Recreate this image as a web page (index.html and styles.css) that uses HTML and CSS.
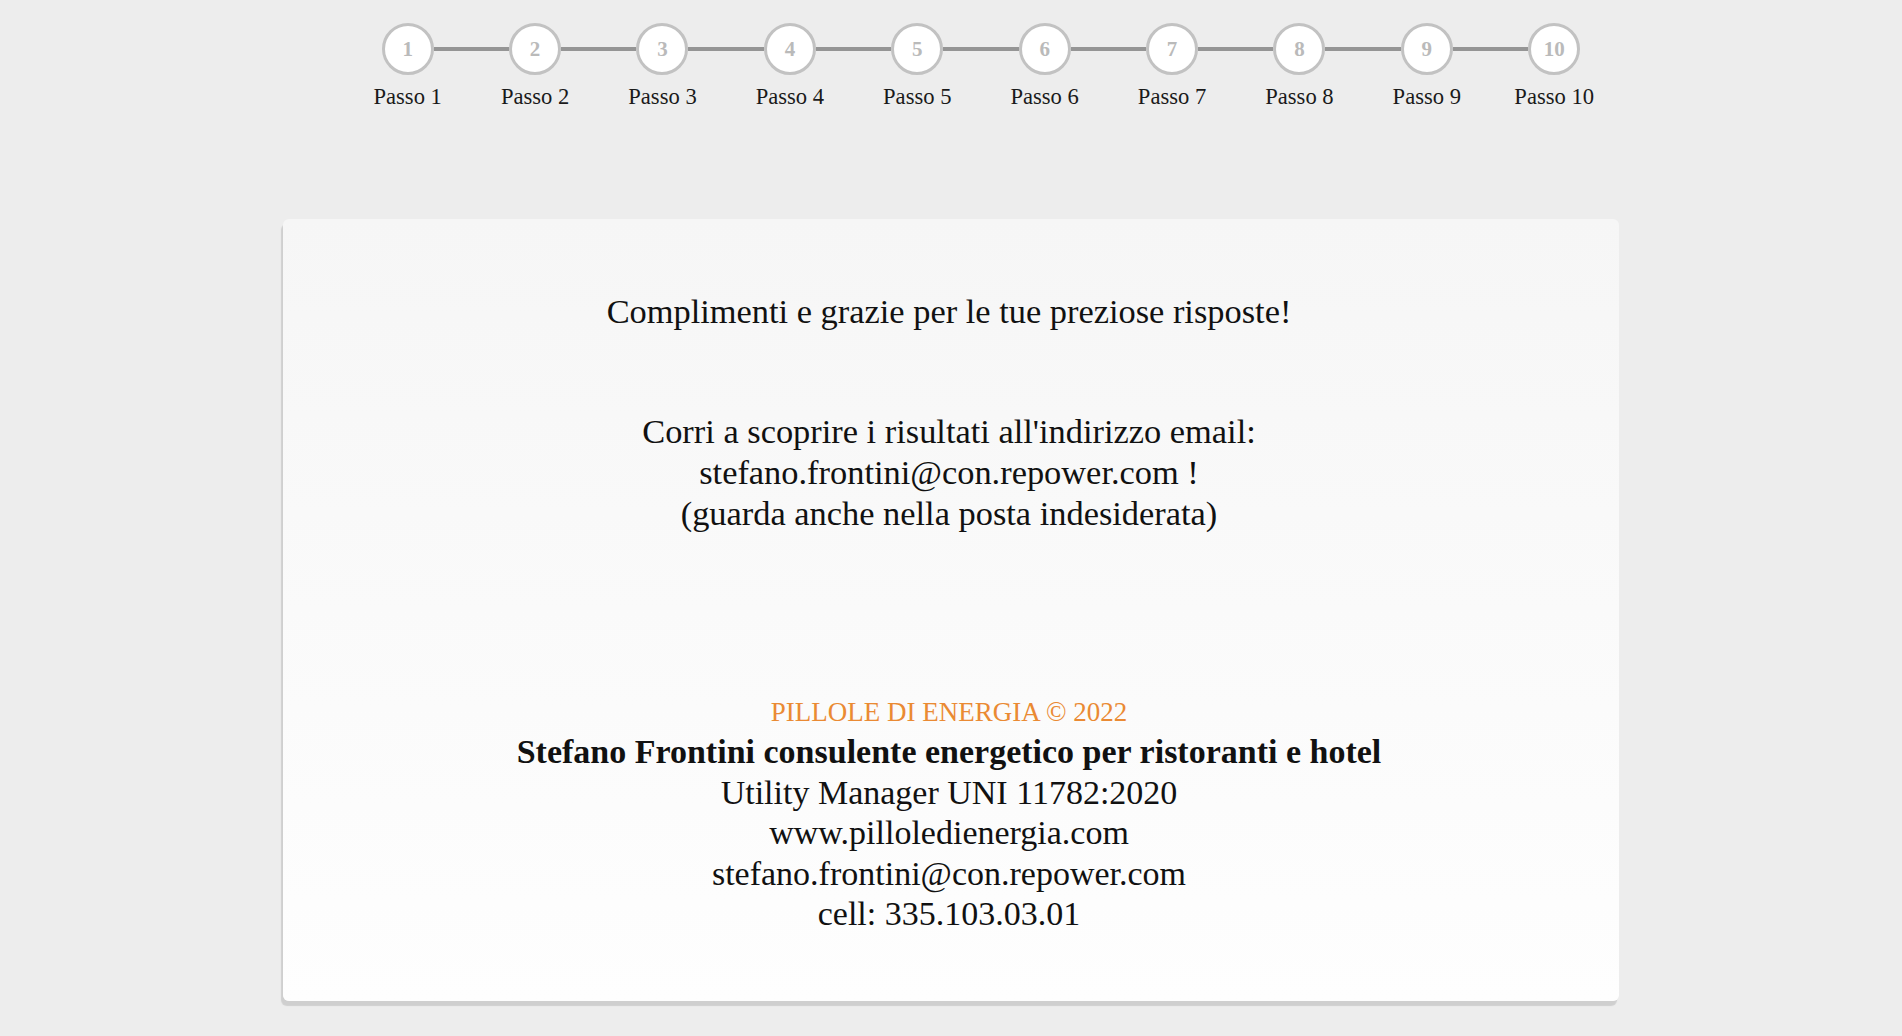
FILE: index.html
```html
<!DOCTYPE html>
<html lang="it">
<head>
<meta charset="utf-8">
<title>Pillole di Energia</title>
<link rel="stylesheet" href="styles.css">
</head>
<body>
<div class="wrap">
  <ol class="steps">
    <li class="step first"><div class="track"><span class="bar"></span><span class="dot">1</span><span class="bar"></span></div><span class="label">Passo 1</span></li>
    <li class="step"><div class="track"><span class="bar"></span><span class="dot">2</span><span class="bar"></span></div><span class="label">Passo 2</span></li>
    <li class="step"><div class="track"><span class="bar"></span><span class="dot">3</span><span class="bar"></span></div><span class="label">Passo 3</span></li>
    <li class="step"><div class="track"><span class="bar"></span><span class="dot">4</span><span class="bar"></span></div><span class="label">Passo 4</span></li>
    <li class="step"><div class="track"><span class="bar"></span><span class="dot">5</span><span class="bar"></span></div><span class="label">Passo 5</span></li>
    <li class="step"><div class="track"><span class="bar"></span><span class="dot">6</span><span class="bar"></span></div><span class="label">Passo 6</span></li>
    <li class="step"><div class="track"><span class="bar"></span><span class="dot">7</span><span class="bar"></span></div><span class="label">Passo 7</span></li>
    <li class="step"><div class="track"><span class="bar"></span><span class="dot">8</span><span class="bar"></span></div><span class="label">Passo 8</span></li>
    <li class="step"><div class="track"><span class="bar"></span><span class="dot">9</span><span class="bar"></span></div><span class="label">Passo 9</span></li>
    <li class="step last"><div class="track"><span class="bar"></span><span class="dot">10</span><span class="bar"></span></div><span class="label">Passo 10</span></li>
  </ol>

  <section class="card">
    <p class="thanks">Complimenti e grazie per le tue preziose risposte!</p>
    <p class="notice">Corri a scoprire i risultati all'indirizzo email:<br>stefano.frontini@con.repower.com !<br>(guarda anche nella posta indesiderata)</p>
    <div class="footer">
      <div class="brand">PILLOLE DI ENERGIA © 2022</div>
      <div class="name">Stefano Frontini consulente energetico per ristoranti e hotel</div>
      <div>Utility Manager UNI 11782:2020</div>
      <div>www.pilloledienergia.com</div>
      <div>stefano.frontini@con.repower.com</div>
      <div>cell: 335.103.03.01</div>
    </div>
  </section>
</div>
</body>
</html>
```

FILE: styles.css
```css
html, body {
  margin: 0;
  padding: 0;
}

body {
  background: #ededed;
  font-family: "Liberation Serif", "Times New Roman", serif;
  color: #111;
  min-height: 1036px;
}

.wrap {
  width: 1336px;
  margin: 0 auto;
}

.steps {
  list-style: none;
  margin: 0;
  padding: 23px 0 0 61px;
  display: flex;
}

.step {
  width: 127.4px;
  flex: 0 0 127.4px;
  display: flex;
  flex-direction: column;
  align-items: center;
}

.track {
  width: 100%;
  display: flex;
  align-items: center;
}

.bar {
  flex: 1;
  height: 4px;
  background: #959595;
}

.first .bar:first-child,
.last .bar:last-child {
  visibility: hidden;
}

.dot {
  box-sizing: border-box;
  width: 52px;
  height: 52px;
  border: 3px solid #c2c2c2;
  border-radius: 50%;
  background: #fff;
  color: #bababa;
  font-weight: bold;
  font-size: 21px;
  line-height: 46px;
  text-align: center;
}

.label {
  margin-top: 9px;
  font-size: 22.6px;
  line-height: 26px;
  color: #1a1a1a;
  white-space: nowrap;
}

.card {
  margin-top: 109px;
  border-radius: 6px;
  background: linear-gradient(#f6f6f6, #fefefe);
  box-shadow: -2px 5px 1px #cfcfcf;
  padding: 72px 22px 66px 18px;
  text-align: center;
}

.thanks {
  margin: 0;
  font-size: 34.4px;
  line-height: 41px;
}

.notice {
  margin: 79px 0 0;
  font-size: 34.4px;
  line-height: 41px;
}

.footer {
  margin-top: 157.5px;
  font-size: 34px;
  line-height: 40.6px;
}

.brand {
  font-size: 27px;
  color: #ea8a33;
}

.name {
  font-weight: bold;
}
```
